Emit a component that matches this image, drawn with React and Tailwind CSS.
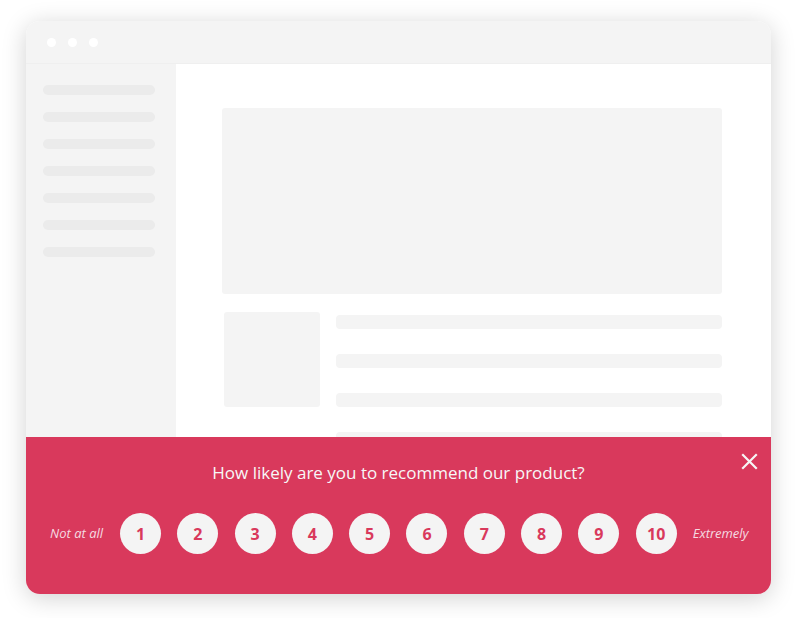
const SIDEBAR_BARS = [0, 1, 2, 3, 4, 5, 6]
const SCORES = [1, 2, 3, 4, 5, 6, 7, 8, 9, 10]

function CloseIcon() {
  return (
    <svg width="17" height="17" viewBox="0 0 17 17" fill="none" stroke="#f6f6f6" strokeWidth="2.2" strokeLinecap="square">
      <path d="M2 2 L15 15 M15 2 L2 15" />
    </svg>
  )
}

export default function App() {
  return (
    <div className="h-[618px] w-[800px] bg-white pl-[26px] pt-[21px]" style={{ fontFamily: '"Open Sans", Lato, sans-serif' }}>
      <div className="flex h-[573px] w-[745px] flex-col overflow-hidden rounded-[14px] bg-white shadow-[0_4px_24px_rgba(0,0,0,0.18)]">
        {/* title bar */}
        <div className="flex h-[42px] shrink-0 items-center gap-[12px] bg-[#f4f4f4] pl-[21px]">
          <span className="size-[9px] rounded-full bg-white" />
          <span className="size-[9px] rounded-full bg-white" />
          <span className="size-[9px] rounded-full bg-white" />
        </div>

        <div className="flex h-[374px] shrink-0 overflow-hidden border-t border-[#efefef]">
          <div className="flex w-[150px] shrink-0 flex-col gap-[17px] bg-[#f4f4f4] pl-[17px] pt-[21px]">
            {SIDEBAR_BARS.map((i) => (
              <div key={i} className="h-[10px] w-[112px] rounded-full bg-[#ebebeb]" />
            ))}
          </div>
          <div className="flex-1 pl-[46px] pt-[44px]">
            <div className="h-[186px] w-[500px] rounded-[3px] bg-[#f4f4f4]" />
            <div className="mt-[18px] flex">
              <div className="ml-[2px] h-[95px] w-[96px] rounded-[3px] bg-[#f4f4f4]" />
              <div className="ml-[16px] flex flex-col gap-[25px] pt-[3px]">
                <div className="h-[14px] w-[386px] rounded-[4px] bg-[#f4f4f4]" />
                <div className="h-[14px] w-[386px] rounded-[4px] bg-[#f4f4f4]" />
                <div className="h-[14px] w-[386px] rounded-[4px] bg-[#f4f4f4]" />
                <div className="h-[14px] w-[386px] rounded-[4px] bg-[#f4f4f4]" />
              </div>
            </div>
          </div>
        </div>

        {/* NPS panel */}
        <div className="relative flex flex-1 flex-col items-center bg-[#d9395c]">
          <button type="button" className="absolute right-[13px] top-[16px]">
            <CloseIcon />
          </button>
          <p className="mt-[24px] text-[17px] leading-[24px] text-[#f7f7f7]">
            How likely are you to recommend our product?
          </p>
          <div className="mt-[28px] flex w-full items-center pl-[24px]">
            <span className="w-[70px] text-[13px] italic text-[#f5dbe1]">Not at all</span>
            <div className="flex gap-[16.3px]">
              {SCORES.map((n) => (
                <div
                  key={n}
                  className="flex size-[41px] items-center justify-center rounded-full bg-[#f4f4f4] text-[16px] font-bold text-[#d9395c]"
                >
                  {n}
                </div>
              ))}
            </div>
            <span className="ml-[16px] text-[13px] italic text-[#f5dbe1]">Extremely</span>
          </div>
        </div>
      </div>
    </div>
  )
}
